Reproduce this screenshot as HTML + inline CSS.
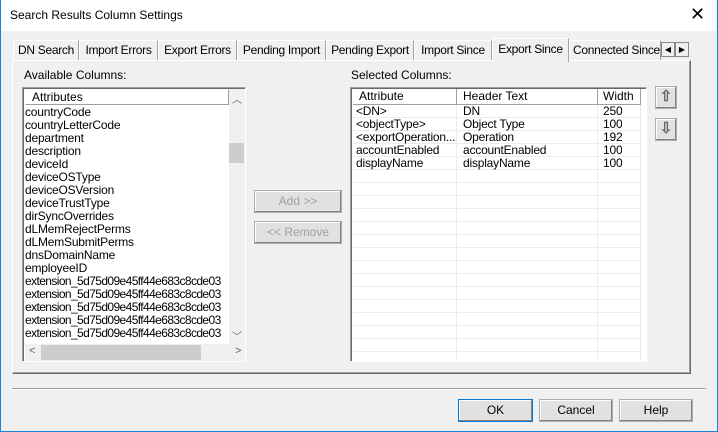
<!DOCTYPE html>
<html><head><style>
*{box-sizing:border-box;margin:0;padding:0}
body{width:718px;height:432px;position:relative;background:#f0f0f0;font-family:"Liberation Sans",sans-serif;font-size:12px;color:#000;overflow:hidden}
.a{position:absolute}
.win{left:0;top:0;width:718px;height:432px;border:1px solid #1883d7;border-top:none}
.title{left:1px;top:0;width:716px;height:31px;background:#fff}
.tab{top:40px;height:20px;border:1px solid #fff;border-right:1px solid #a0a0a0;border-bottom:none;line-height:18px;text-align:center;background:#f0f0f0;letter-spacing:-0.3px;white-space:nowrap}
.list{background:#fff;border:1px solid #a0a0a0;border-right-color:#fff;border-bottom-color:#fff;box-shadow:inset 1px 1px 0 #696969}
.row{position:absolute;left:2px;height:13px;line-height:13px;white-space:nowrap;overflow:hidden;letter-spacing:-0.2px}
.btn{border:1px solid #adadad;background:#e1e1e1;text-align:center;line-height:20px;box-shadow:inset -1px -1px 0 #838383,inset 1px 1px 0 #fff}
.dis{color:#a0a0a0}
</style></head><body>
<div class="a win"></div>
<div class="a title"></div>
<div class="a" style="left:10px;top:8px;font-size:12px">Search Results Column Settings</div>
<div class="a" style="left:690px;top:4px;font-size:18px;line-height:20px">✕</div>

<div class="a" style="left:12px;top:60px;width:679px;height:314px;border:1px solid #fff;border-right-color:#696969;border-bottom-color:#696969;box-shadow:inset -1px -1px 0 #a0a0a0"></div>
<div class="a tab" style="left:13px;width:66px">DN Search</div>
<div class="a tab" style="left:79px;width:79px">Import Errors</div>
<div class="a tab" style="left:158px;width:79px">Export Errors</div>
<div class="a tab" style="left:237px;width:89px">Pending Import</div>
<div class="a tab" style="left:326px;width:88px">Pending Export</div>
<div class="a tab" style="left:414px;width:78px">Import Since</div>
<div class="a tab" style="left:492px;top:38px;height:24px;width:77px;line-height:20px;border-bottom:none">Export Since</div>
<div class="a tab" style="left:569px;width:92px;text-align:left;padding-left:3px;overflow:hidden">Connected Since</div>
<div class="a" style="left:661px;top:42px;width:14px;height:15px;border:1px solid #888;background:#f0f0f0;font-size:8px;text-align:center;line-height:13px">◀</div>
<div class="a" style="left:675px;top:42px;width:14px;height:15px;border:1px solid #888;background:#f0f0f0;font-size:8px;text-align:center;line-height:13px">▶</div>

<div class="a" style="left:24px;top:68px">Available Columns:</div>
<div class="a" style="left:351px;top:68px">Selected Columns:</div>

<div class="a list" style="left:22px;top:87px;width:224px;height:275px;overflow:hidden">
 <div class="a" style="left:2px;top:1px;width:204px;height:16px;border:1px solid #fff;border-right-color:#a0a0a0;border-bottom-color:#a0a0a0;background:#fff;padding-left:6px;line-height:14px">Attributes</div>
 <div class="a" style="left:206px;top:1px;width:16px;height:256px;background:#f0f0f0"></div>
 <div class="a" style="left:206px;top:55px;width:15px;height:20px;background:#cdcdcd"></div>
 <div class="a" style="left:209px;top:3px;font-size:10px;color:#606060">︿</div>
 <div class="a" style="left:209px;top:240px;font-size:10px;color:#606060">﹀</div>
 <div class="a" style="left:2px;top:256px;width:220px;height:17px;background:#f0f0f0"></div>
 <div class="a" style="left:18px;top:257px;width:160px;height:15px;background:#cdcdcd"></div>
 <div class="a" style="left:6px;top:257px;font-size:11px;color:#606060">&lt;</div>
 <div class="a" style="left:212px;top:257px;font-size:11px;color:#606060">&gt;</div>
 <div class="row" style="top:18px">countryCode</div>
 <div class="row" style="top:31px">countryLetterCode</div>
 <div class="row" style="top:44px">department</div>
 <div class="row" style="top:57px">description</div>
 <div class="row" style="top:70px">deviceId</div>
 <div class="row" style="top:83px">deviceOSType</div>
 <div class="row" style="top:96px">deviceOSVersion</div>
 <div class="row" style="top:109px">deviceTrustType</div>
 <div class="row" style="top:122px">dirSyncOverrides</div>
 <div class="row" style="top:135px">dLMemRejectPerms</div>
 <div class="row" style="top:148px">dLMemSubmitPerms</div>
 <div class="row" style="top:161px">dnsDomainName</div>
 <div class="row" style="top:174px">employeeID</div>
 <div class="row" style="top:187px;width:204px;letter-spacing:-0.6px">extension_5d75d09e45ff44e683c8cde03</div>
 <div class="row" style="top:200px;width:204px;letter-spacing:-0.6px">extension_5d75d09e45ff44e683c8cde03</div>
 <div class="row" style="top:213px;width:204px;letter-spacing:-0.6px">extension_5d75d09e45ff44e683c8cde03</div>
 <div class="row" style="top:226px;width:204px;letter-spacing:-0.6px">extension_5d75d09e45ff44e683c8cde03</div>
 <div class="row" style="top:239px;width:204px;letter-spacing:-0.6px">extension_5d75d09e45ff44e683c8cde03</div>
</div>

<div class="a btn dis" style="left:254px;top:190px;width:88px;height:23px">Add &gt;&gt;</div>
<div class="a btn dis" style="left:254px;top:221px;width:88px;height:23px">&lt;&lt; Remove</div>

<div class="a list" style="left:350px;top:87px;width:297px;height:275px;overflow:hidden">
 <div class="a" style="left:2px;top:1px;width:104px;height:16px;border-right:1px solid #a0a0a0;border-bottom:1px solid #a0a0a0;padding-left:6px;line-height:15px">Attribute</div>
 <div class="a" style="left:106px;top:1px;width:141px;height:16px;border-right:1px solid #a0a0a0;border-bottom:1px solid #a0a0a0;padding-left:6px;line-height:15px">Header Text</div>
 <div class="a" style="left:247px;top:1px;width:43px;height:16px;border-right:1px solid #a0a0a0;border-bottom:1px solid #a0a0a0;padding-left:5px;line-height:15px">Width</div>
 <div class="a" style="left:2px;top:17px;width:288px;height:255px;border-right:1px solid #e8e8e8;background:repeating-linear-gradient(#fff 0 12px,#ececec 12px 13px)"></div>
 <div class="a" style="left:105px;top:17px;width:1px;height:255px;background:#ececec"></div>
 <div class="a" style="left:246px;top:17px;width:1px;height:255px;background:#ececec"></div>
 <div class="row" style="top:17px;left:5px">&lt;DN&gt;</div><div class="row" style="top:17px;left:112px">DN</div><div class="row" style="top:17px;left:252px">250</div>
 <div class="row" style="top:30px;left:5px">&lt;objectType&gt;</div><div class="row" style="top:30px;left:112px">Object Type</div><div class="row" style="top:30px;left:252px">100</div>
 <div class="row" style="top:43px;left:5px;width:100px">&lt;exportOperation...</div><div class="row" style="top:43px;left:112px">Operation</div><div class="row" style="top:43px;left:252px">192</div>
 <div class="row" style="top:56px;left:5px">accountEnabled</div><div class="row" style="top:56px;left:112px">accountEnabled</div><div class="row" style="top:56px;left:252px">100</div>
 <div class="row" style="top:69px;left:5px">displayName</div><div class="row" style="top:69px;left:112px">displayName</div><div class="row" style="top:69px;left:252px">100</div>
</div>

<div class="a btn" style="left:655px;top:86px;width:22px;height:23px;color:#666;font-size:15px;font-weight:bold;line-height:20px">⇧</div>
<div class="a btn" style="left:655px;top:118px;width:22px;height:23px;color:#666;font-size:15px;font-weight:bold;line-height:20px">⇩</div>

<div class="a" style="left:12px;top:388px;width:694px;height:2px;border-top:1px solid #a0a0a0;border-bottom:1px solid #fff"></div>
<div class="a btn" style="left:458px;top:399px;width:75px;height:23px;border-color:#0078d7">OK</div>
<div class="a btn" style="left:539px;top:399px;width:74px;height:23px">Cancel</div>
<div class="a btn" style="left:619px;top:399px;width:74px;height:23px">Help</div>
</body></html>
